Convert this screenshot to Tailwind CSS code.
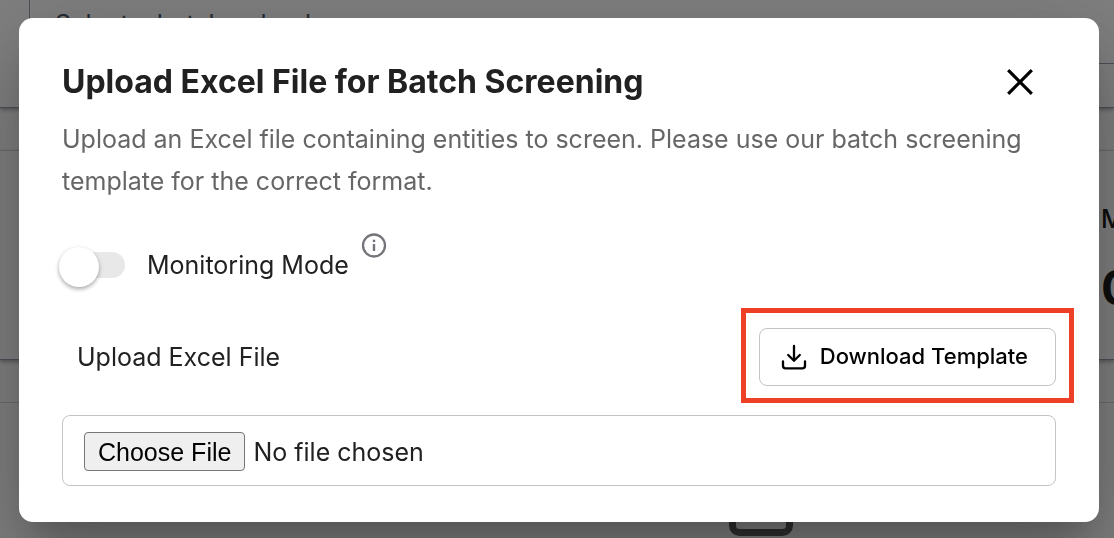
<!DOCTYPE html>
<html lang="en">
<head>
    <meta charset="UTF-8">
    <meta name="viewport" content="width=device-width, initial-scale=1.0">
    <title>Batch Screening</title>
    <script src="https://cdn.jsdelivr.net/npm/@tailwindcss/browser@4"></script>
</head>
<body class="h-screen overflow-hidden bg-white font-['Inter',sans-serif] text-[25px] text-[#212121]">
    <!-- Page behind the dialog -->
    <main class="flex h-screen flex-col gap-[42px] overflow-hidden" aria-hidden="true">
        <section class="h-[108px] shrink-0 border-b border-gray-400 pl-[29px] shadow-[0_2px_4px_rgba(0,0,0,0.3)]">
            <div class="h-16 border-b border-l border-gray-400 pt-2 pl-[25px] leading-[32px] text-gray-600">Select a batch upload</div>
        </section>
        <section class="flex h-[210px] shrink-0 justify-end border-t border-b border-t-gray-300 border-b-gray-400 pt-[52px] shadow-[0_2px_4px_rgba(0,0,0,0.3)]">
            <div class="w-[13px] text-[#1c1c1c]">
                <p class="leading-[32px] font-medium">M</p>
                <p class="pt-5 text-5xl leading-[66px] font-bold">0</p>
            </div>
        </section>
        <section class="flex grow flex-col items-center justify-end border-t border-gray-300 pb-[2px] pl-[408px]">
            <svg class="h-16 w-16 text-[#606060]" viewBox="0 0 64 64" fill="none" stroke="currentColor" stroke-width="7">
                <rect x="3.5" y="3.5" width="57" height="57" rx="7"/>
            </svg>
        </section>
    </main>

    <div class="fixed inset-0 overflow-auto bg-black/50 pt-[18px] pr-[15px] pb-4 pl-[19px]">
        <div role="dialog" aria-labelledby="dialog-title" class="rounded-[14px] bg-white px-[43px] pt-11 pb-9 shadow-[0_22px_30px_-14px_rgba(0,0,0,0.2),0_48px_76px_6px_rgba(0,0,0,0.14),0_18px_92px_16px_rgba(0,0,0,0.12)]">
            <div class="flex items-center justify-between pr-[17px]">
                <h1 id="dialog-title" class="text-[32px] leading-[40px] font-bold">Upload Excel File for Batch Screening</h1>
                <button type="button" aria-label="Close" class="text-black">
                    <svg class="h-[38px] w-[38px]" viewBox="0 0 38 38" fill="none" stroke="currentColor" stroke-width="3.2">
                        <path d="M7.2 7.2l23.6 23.6M30.8 7.2l-23.6 23.6"/>
                    </svg>
                </button>
            </div>
            <p class="mt-4 leading-[42px] text-[#666666]">Upload an Excel file containing entities to screen. Please use our batch screening template for the correct format.</p>

            <div class="mt-10 flex h-[46px] items-center">
                <label class="flex cursor-pointer items-center">
                    <input type="checkbox" role="switch" class="peer sr-only">
                    <span class="relative h-[26px] w-[63px] rounded-full bg-[#e8e8e8]">
                        <span class="absolute -top-[5px] -left-[3px] h-10 w-10 rounded-full bg-white shadow-[0_2px_4px_rgba(0,0,0,0.35)]"></span>
                    </span>
                    <span class="ml-[22px] leading-[42px]">Monitoring Mode</span>
                </label>
                <button type="button" aria-label="About monitoring mode" class="ml-[10px] self-start text-[#74747b]">
                    <svg class="-mt-3 h-[30px] w-[30px]" viewBox="0 0 30 30" fill="currentColor">
                        <circle cx="15" cy="15.5" r="11" fill="none" stroke="currentColor" stroke-width="2.3"/>
                        <rect x="13.8" y="14" width="2.4" height="7"/>
                        <rect x="13.8" y="9.7" width="2.4" height="2.4"/>
                    </svg>
                </button>
            </div>

            <div class="mt-10 flex items-center justify-between">
                <label for="excel-file" class="pl-[15px] leading-[42px]">Upload Excel File</label>
                <div class="relative">
                    <button type="button" class="flex h-[58px] items-center rounded-lg border border-[#c4c4c4] pr-[27px] pb-px pl-5 text-[22px] font-medium text-black">
                        <svg class="mr-3 h-7 w-7" viewBox="0 0 28 28" fill="none" stroke="currentColor" stroke-width="2.3" stroke-linecap="round" stroke-linejoin="round">
                            <path d="M14 3v14.5M8.2 12l5.8 5.8 5.8-5.8"/>
                            <path d="M3 18.5v4.2a2.6 2.6 0 0 0 2.6 2.6h16.8a2.6 2.6 0 0 0 2.6-2.6v-4.2"/>
                        </svg>
                        Download Template
                    </button>
                    <span class="pointer-events-none absolute -top-5 -right-[18px] -bottom-[17px] -left-[18px] border-5 border-[#ee4027]"></span>
                </div>
            </div>

            <input type="file" id="excel-file" class="mt-[29px] block h-[71px] w-full rounded-lg border border-[#c4c4c4] px-[21px] py-4 text-[25px] leading-[38px] file:mr-2 file:h-[39px] file:rounded-[4px] file:border file:border-solid file:border-[#767676] file:bg-[#efefef] file:px-[13px] file:font-['Liberation_Sans',sans-serif] file:text-[25px] file:leading-[36px] file:text-black">
        </div>
    </div>
</body>
</html>
